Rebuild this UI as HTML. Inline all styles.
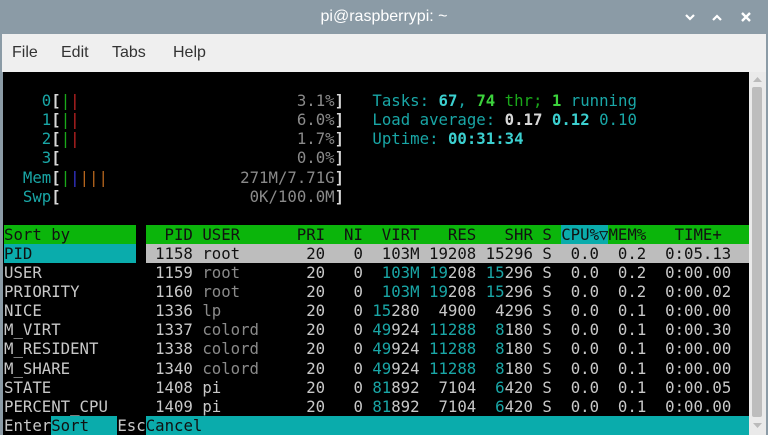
<!DOCTYPE html>
<html><head><meta charset="utf-8"><style>
*{margin:0;padding:0;box-sizing:border-box}
body{width:768px;height:435px;overflow:hidden;background:#8b9ba6;position:relative;font-family:"Liberation Sans",sans-serif}
#title{position:absolute;left:0;top:0;width:768px;height:34px;background:#8b9ba6;color:#fff;font-size:16px;text-align:center;line-height:34px}
#menu{position:absolute;left:2px;top:34px;width:764px;height:38px;background:#efefef;font-size:16px;color:#333}
#menu span{position:absolute;top:10px}
#term{position:absolute;left:3px;top:72px;width:746px;height:363px;background:#000;overflow:hidden;font-family:"DejaVu Sans Mono",monospace;font-size:15.7px}
#sb{position:absolute;left:749px;top:72px;width:17px;height:363px;background:#eaeaea}
.r{position:absolute;left:1px;height:19.1px;line-height:19.1px;white-space:pre;font-family:"DejaVu Sans Mono",monospace;font-size:15.7px;color:#c8c8c8}
.m{left:calc(1px + 15ch)}
.c{color:#19a6a6}.cb{color:#3cd0d0;font-weight:bold}.g{color:#1aa81a}.gb{color:#3cd23c;font-weight:bold}
.rd{color:#b22}.bl{color:#33c}.or{color:#b5651d}.d{color:#8a8a8a}.wb{color:#d8d8d8;font-weight:bold}
.u{color:#8a8a8a}
.hg{background:#0bb50b;color:#111}.hc{background:#0aacac;color:#111}.sel{background:#bdbdbd;color:#111}
</style></head><body>
<div id="title">pi@raspberrypi: ~</div>
<svg style="position:absolute;left:682px;top:10px" width="80" height="16" viewBox="0 0 80 16">
<path d="M4 5 L8 9 L12 5" stroke="#fff" stroke-width="2.2" fill="none"/>
<path d="M31 10 L35 6 L39 10" stroke="#fff" stroke-width="2.2" fill="none"/>
<path d="M60 3 L68 11 M68 3 L60 11" stroke="#fff" stroke-width="2.4" fill="none"/>
</svg>
<div id="menu"><span style="left:10px">File</span><span style="left:59px">Edit</span><span style="left:110px">Tabs</span><span style="left:171px">Help</span></div>
<div id="term">
<div class="r" style="top:19.1px">    <span class="c">0</span><span class="wb">[</span><span class="g">|</span><span class="rd">|</span>                       <span class="d">3.1%</span><span class="wb">]</span>   <span class="c">Tasks: </span><span class="cb">67</span><span class="c">, </span><span class="gb">74</span><span class="g"> thr; </span><span class="gb">1</span><span class="c"> running</span></div>
<div class="r" style="top:38.2px">    <span class="c">1</span><span class="wb">[</span><span class="g">|</span><span class="rd">|</span>                       <span class="d">6.0%</span><span class="wb">]</span>   <span class="c">Load average: </span><span class="wb">0.17 </span><span class="cb">0.12 </span><span class="c">0.10</span></div>
<div class="r" style="top:57.3px">    <span class="c">2</span><span class="wb">[</span><span class="g">|</span><span class="rd">|</span>                       <span class="d">1.7%</span><span class="wb">]</span>   <span class="c">Uptime: </span><span class="cb">00:31:34</span></div>
<div class="r" style="top:76.4px">    <span class="c">3</span><span class="wb">[</span>                         <span class="d">0.0%</span><span class="wb">]</span></div>
<div class="r" style="top:95.5px">  <span class="c">Mem</span><span class="wb">[</span><span class="g">|</span><span class="bl">|</span><span class="or">|||</span>              <span class="d">271M/7.71G</span><span class="wb">]</span></div>
<div class="r" style="top:114.6px">  <span class="c">Swp</span><span class="wb">[</span>                    <span class="d">0K/100.0M</span><span class="wb">]</span></div>

<div class="r" style="top:152.8px"><span class="hg">Sort by       </span></div>
<div class="r" style="top:171.9px"><span class="hc">PID           </span></div>
<div class="r" style="top:191px">USER</div>
<div class="r" style="top:210.1px">PRIORITY</div>
<div class="r" style="top:229.2px">NICE</div>
<div class="r" style="top:248.3px">M_VIRT</div>
<div class="r" style="top:267.4px">M_RESIDENT</div>
<div class="r" style="top:286.5px">M_SHARE</div>
<div class="r" style="top:305.6px">STATE</div>
<div class="r" style="top:324.7px">PERCENT_CPU</div>

<div class="r m" style="top:152.8px"><span class="hg">  PID USER      PRI  NI  VIRT   RES   SHR S </span><span class="hc">CPU%▽</span><span class="hg">MEM%   TIME+   </span></div>
<div class="r m" style="top:171.9px"><span class="sel"> 1158 root       20   0  103M 19208 15296 S  0.0  0.2  0:05.13  </span></div>
<div class="r m" style="top:191px"> 1159 <span class="u">root</span>       20   0  <span class="c">103M</span> <span class="c">19</span>208 <span class="c">15</span>296 S  0.0  0.2  0:00.00</div>
<div class="r m" style="top:210.1px"> 1160 <span class="u">root</span>       20   0  <span class="c">103M</span> <span class="c">19</span>208 <span class="c">15</span>296 S  0.0  0.2  0:00.02</div>
<div class="r m" style="top:229.2px"> 1336 <span class="u">lp</span>         20   0 <span class="c">15</span>280  4900  4296 S  0.0  0.1  0:00.00</div>
<div class="r m" style="top:248.3px"> 1337 <span class="u">colord</span>     20   0 <span class="c">49</span>924 <span class="c">11288</span>  <span class="c">8</span>180 S  0.0  0.1  0:00.30</div>
<div class="r m" style="top:267.4px"> 1338 <span class="u">colord</span>     20   0 <span class="c">49</span>924 <span class="c">11288</span>  <span class="c">8</span>180 S  0.0  0.1  0:00.00</div>
<div class="r m" style="top:286.5px"> 1340 <span class="u">colord</span>     20   0 <span class="c">49</span>924 <span class="c">11288</span>  <span class="c">8</span>180 S  0.0  0.1  0:00.00</div>
<div class="r m" style="top:305.6px"> 1408 pi         20   0 <span class="c">81</span>892  7104  <span class="c">6</span>420 S  0.0  0.1  0:00.05</div>
<div class="r m" style="top:324.7px"> 1409 pi         20   0 <span class="c">81</span>892  7104  <span class="c">6</span>420 S  0.0  0.1  0:00.00</div>

<div class="r" style="top:343.8px">Enter<span class="hc">Sort   </span>Esc<span class="hc">Cancel                                                          </span></div>
</div>
<div id="sb"><div style="position:absolute;left:3px;top:15px;width:10px;height:330px;background:#bdbdbd;border-radius:2px"></div>
<svg style="position:absolute;left:3px;top:4px" width="11" height="7"><path d="M1 6 L5.5 1 L10 6Z" fill="#bbb"/></svg>
<svg style="position:absolute;left:3px;top:350px" width="11" height="7"><path d="M1 1 L5.5 6 L10 1Z" fill="#bbb"/></svg></div>
</body></html>
